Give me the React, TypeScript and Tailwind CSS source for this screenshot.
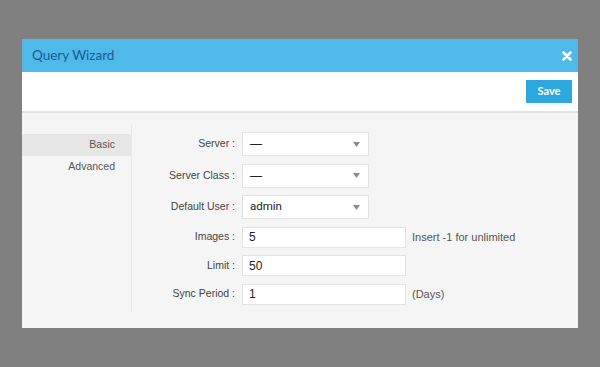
import React from 'react';

const SelectRow = ({ label, value }: { label: string; value: string }) => (
  <div className="flex items-center h-[24px]">
    <label className="w-[104px] text-right text-[10.5px] text-[#444] pr-[1px]">{label} :</label>
    <div className="ml-[6px] w-[127px] h-[24px] bg-white border border-[#e4e4e4] flex items-center justify-between pl-[7px] pr-[8px]">
      {value === 'dash' ? (
        <span className="text-[12px] text-[#222]">—</span>
      ) : (
        <span className="text-[11.5px] text-[#222] font-['Roboto',sans-serif]">{value}</span>
      )}
      <svg width="7" height="5" viewBox="0 0 7 5">
        <path d="M0 0 L7 0 L3.5 5 Z" fill="#8a8a8a" />
      </svg>
    </div>
  </div>
);

const InputRow = ({ label, value, hint }: { label: string; value: string; hint?: string }) => (
  <div className="flex items-center h-[21px]">
    <label className="w-[104px] text-right text-[10.5px] text-[#444] pr-[1px]">{label} :</label>
    <div className="ml-[6px] w-[164px] h-[21px] bg-white border border-[#e4e4e4] flex items-center pl-[6px]">
      <span className="text-[12px] text-[#222]">{value}</span>
    </div>
    {hint && <span className="ml-[6px] text-[11px] text-[#555]">{hint}</span>}
  </div>
);

export default function App() {
  return (
    <div className="w-[600px] h-[367px] bg-[#808080] pt-[39px] pl-[22px] font-['Liberation_Sans',Arial,sans-serif]">
      <div className="w-[556px] bg-white">
        {/* Header */}
        <div className="h-[33px] bg-[#4fb9ea] flex items-center justify-between pl-[10px] pr-[6px]">
          <span className="text-[13.5px] text-[#1a5a94] font-['Lato',sans-serif]">Query Wizard</span>
          <svg width="10" height="10" viewBox="0 0 10 10">
            <path d="M1.5 1.5 L8.5 8.5 M8.5 1.5 L1.5 8.5" stroke="white" strokeWidth="2.6" strokeLinecap="round" />
          </svg>
        </div>

        {/* Toolbar */}
        <div className="h-[41px] bg-white border-b-2 border-[#e3e3e3] flex items-center justify-end pr-[6px]">
          <button className="w-[46px] h-[23px] bg-[#2ca8de] text-white text-[11px] font-bold font-['Lato',sans-serif]">
            Save
          </button>
        </div>

        {/* Body */}
        <div className="h-[215px] bg-[#f5f5f5] pt-[11px] flex">
          <div className="w-[110px] h-[188px] border-r border-[#e9e9e9] pt-[10px] text-[10.5px] text-[#555]">
            <div className="h-[22px] bg-[#e6e6e6] flex items-center justify-end pr-[16px]">Basic</div>
            <div className="h-[22px] flex items-center justify-end pr-[16px]">Advanced</div>
          </div>
          <div className="pt-[8px] flex flex-col gap-[7.5px]">
            <SelectRow label="Server" value="dash" />
            <SelectRow label="Server Class" value="dash" />
            <SelectRow label="Default User" value="admin" />
            <InputRow label="Images" value="5" hint="Insert -1 for unlimited" />
            <InputRow label="Limit" value="50" />
            <InputRow label="Sync Period" value="1" hint="(Days)" />
          </div>
        </div>
      </div>
    </div>
  );
}
